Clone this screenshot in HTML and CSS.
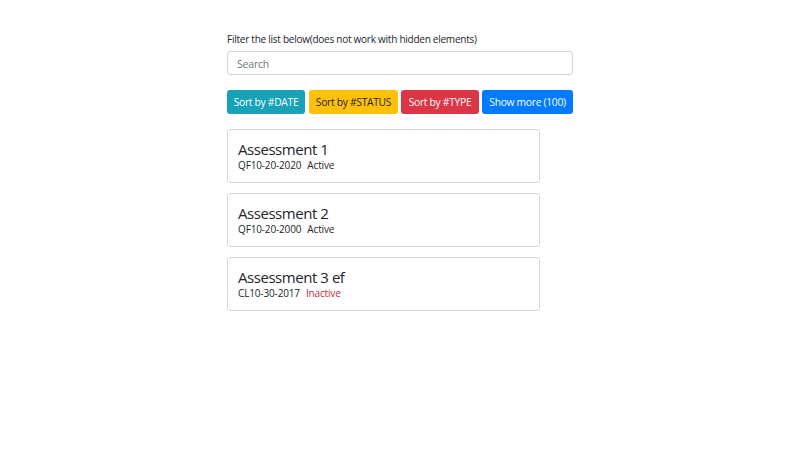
FILE: index.html
```html
<!DOCTYPE html>
<html>
<head>
<meta charset="utf-8">
<link rel="stylesheet" href="styles.css">
</head>
<body>
<div class="wrap">
  <label class="lbl" for="search">Filter the list below(does not work with hidden elements)</label>
  <input id="search" class="search" type="text" placeholder="Search">
  <div class="btns">
    <button class="btn info">Sort by #DATE</button>
    <button class="btn warning">Sort by #STATUS</button>
    <button class="btn danger">Sort by #TYPE</button>
    <button class="btn primary">Show more (100)</button>
  </div>
  <div class="list">
    <div class="card">
      <div class="title">Assessment 1</div>
      <div class="meta"><span>QF10-20-2020</span><span class="active">Active</span></div>
    </div>
    <div class="card">
      <div class="title">Assessment 2</div>
      <div class="meta"><span>QF10-20-2000</span><span class="active">Active</span></div>
    </div>
    <div class="card">
      <div class="title">Assessment 3 ef</div>
      <div class="meta"><span>CL10-30-2017</span><span class="inactive">Inactive</span></div>
    </div>
  </div>
</div>
</body>
</html>
```
FILE: styles.css
```css
html, body { margin: 0; padding: 0; background: #fff; }
body { font-family: "Open Sans", "Noto Sans", sans-serif; color: #212529; }
.wrap { width: 346px; margin-left: 227px; padding-top: 32px; display: flex; flex-direction: column; }
.lbl { font-size: 10px; line-height: 14px; letter-spacing: -0.25px; margin-bottom: 5px; color: #212529; }
.search { box-sizing: border-box; height: 24px; width: 100%; border: 1px solid #ced4da; border-radius: 3px; padding: 1px 9px 0; font-family: inherit; font-size: 10.5px; letter-spacing: -0.2px; color: #495057; outline: none; }
.search::placeholder { color: #6c757d; }
.btns { display: flex; gap: 3px; margin-top: 15px; }
.btn { height: 24px; border: none; border-radius: 3px; font-family: inherit; font-size: 10.3px; letter-spacing: -0.3px; padding: 0; color: #fff; cursor: pointer; }
.btn.info { background: #17a2b8; width: 78px; }
.btn.warning { background: #ffc107; color: #212529; width: 89px; margin-left: 1px; }
.btn.danger { background: #dc3545; width: 78px; }
.btn.primary { background: #007bff; width: 91px; }
.list { display: flex; flex-direction: column; gap: 10px; margin-top: 15px; width: 313px; }
.card { box-sizing: border-box; height: 54px; border: 1px solid #d6d6d6; border-radius: 3px; padding: 9px 10px 0; }
.title { font-size: 15px; line-height: 20px; letter-spacing: -0.45px; color: #212529; }
.meta { font-size: 10px; line-height: 13px; letter-spacing: -0.15px; display: flex; gap: 6px; }
.inactive { color: #cc2a36; }
```
